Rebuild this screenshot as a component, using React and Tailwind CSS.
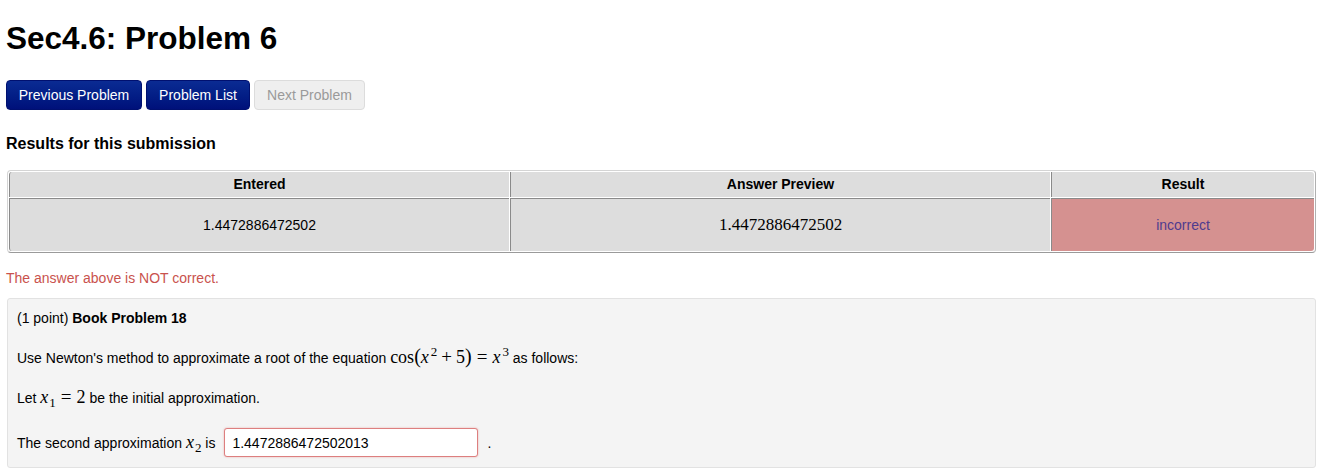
import React from 'react';

// --- small inline math pieces (MathJax look) ---
const MI = ({ children }) => (
    <span className="italic font-['Liberation_Serif',serif]">{children}</span>
);

// leading 0 so the bigger math glyphs don't stretch the text line
const Math = ({ children }) => (
    <span className="font-['Liberation_Serif',serif] text-[18px] leading-[0] not-italic whitespace-nowrap">{children}</span>
);

const Op = ({ children, wide }) => (
    <span className={wide ? 'mx-[5px] text-[19px]' : 'mx-[4px] text-[19px]'}>{children}</span>
);

const Paren = ({ children }) => <span className="text-[20px]">{children}</span>;

const Sup = ({ children }) => <span className="text-[13px] relative -top-[7px] ml-[2px] align-baseline">{children}</span>;
const Sub = ({ children }) => <span className="text-[13px] relative top-[4px] ml-[1px] align-baseline">{children}</span>;

const App = () => {
    const navBtn = 'h-[30px] rounded-[4px] text-[14px] flex items-center justify-center';

    return (
        <div className="min-h-[474px] bg-white px-[6px] font-['Liberation_Sans',Arial,sans-serif] text-black">
            <h1 className="pt-[20px] text-[31.5px] leading-[36px] font-bold">Sec4.6: Problem 6</h1>

            <div className="mt-[24px] flex gap-[4px]">
                <button className={`${navBtn} w-[136px] bg-linear-to-b from-[#0b2b93] to-[#00107a] border border-[#001070] text-white`}>
                    Previous Problem
                </button>
                <button className={`${navBtn} w-[104px] bg-linear-to-b from-[#0b2b93] to-[#00107a] border border-[#001070] text-white`}>
                    Problem List
                </button>
                <button className={`${navBtn} w-[111px] bg-[#efefef] border border-[#dcdcdc] text-[#9a9a9a]`} disabled>
                    Next Problem
                </button>
            </div>

            <h2 className="mt-[24px] text-[16px] leading-[19px] font-bold">Results for this submission</h2>

            <table className="mt-[17px] ml-px w-[1309px] border-separate border-spacing-px rounded-[4px] border border-[#d4d4d4] border-b-[#9a9a9a] border-r-[#b0b0b0] text-[14px]">
                <thead>
                    <tr>
                        <th className="w-[500px] h-[25px] bg-[#dddddd] border-l border-[#8a8a8a] font-bold rounded-tl-[3px]">Entered</th>
                        <th className="w-[540px] h-[25px] bg-[#dddddd] border-l border-[#8a8a8a] font-bold">Answer Preview</th>
                        <th className="h-[25px] bg-[#dddddd] border-l border-[#8a8a8a] font-bold rounded-tr-[3px]">Result</th>
                    </tr>
                </thead>
                <tbody>
                    <tr>
                        <td className="h-[53px] bg-[#dddddd] border-l border-t border-[#8a8a8a] text-center rounded-bl-[3px]">1.4472886472502</td>
                        <td className="h-[53px] bg-[#dddddd] border-l border-t border-[#8a8a8a] text-center">
                            <span className="font-['Liberation_Serif',serif] text-[17px]">1.4472886472502</span>
                        </td>
                        <td className="h-[53px] bg-[#d59190] border-l border-t border-[#8a8a8a] text-center text-[#4f3b8e] rounded-br-[3px]">incorrect</td>
                    </tr>
                </tbody>
            </table>

            <p className="mt-[15px] text-[14px] leading-[20px] text-[#c9524d]">The answer above is NOT correct.</p>

            <div className="mt-[10px] ml-px w-[1309px] rounded-[3px] border border-[#e2e2e2] bg-[#f4f4f4] px-[9px] pt-[9px] pb-[10px] text-[14px] leading-[20px]">
                <div className="flex flex-col gap-[20px]">
                    <p>
                        (1 point) <b>Book Problem 18</b>
                    </p>
                    <p>
                        Use Newton's method to approximate a root of the equation{' '}
                        <Math>
                            cos<Paren>(</Paren><MI>x</MI>
                            <Sup>2</Sup><Op>+</Op>5<Paren>)</Paren><Op wide>=</Op><MI>x</MI>
                            <Sup>3</Sup>
                        </Math>{' '}
                        as follows:
                    </p>
                    <p>
                        Let{' '}
                        <Math>
                            <MI>x</MI>
                            <Sub>1</Sub><Op wide>=</Op>2
                        </Math>{' '}
                        be the initial approximation.
                    </p>
                    <div className="flex items-center">
                        <span>
                            The second approximation{' '}
                            <Math>
                                <MI>x</MI>
                                <Sub>2</Sub>
                            </Math>{' '}
                            is
                        </span>
                        <input
                            readOnly
                            value="1.4472886472502013"
                            className="ml-[9px] h-[29px] w-[254px] rounded-[3px] border border-[#dd7f7f] bg-white px-[7px] text-[14px] outline-none shadow-[0_0_2px_rgba(217,83,79,0.45)]"
                        />
                        <span className="ml-[9px]">.</span>
                    </div>
                </div>
            </div>
        </div>
    );
};

export default App;
